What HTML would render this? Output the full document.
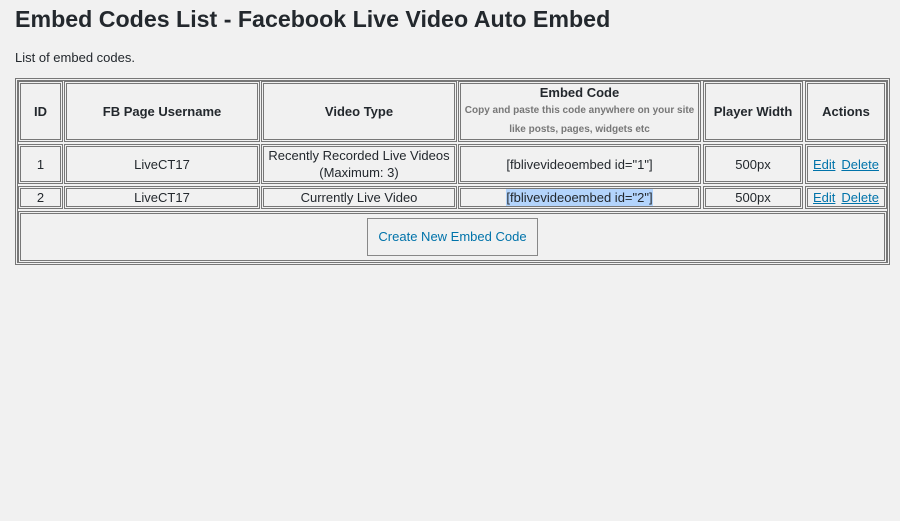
<!DOCTYPE html>
<html><head><style>
body{margin:0;background:#f1f1f1;font-family:"Liberation Sans",sans-serif;color:#23282d;width:900px;height:521px;position:relative;overflow:hidden}
h1{position:absolute;left:15px;top:6px;margin:0;font-size:23.2px;font-weight:bold;color:#23282d}
p{position:absolute;left:15px;top:50px;margin:0;font-size:13px}
.t{position:absolute;left:15px;top:78px;width:875px;height:187px;box-sizing:border-box;border:3px double #777}
.c{position:absolute;box-sizing:border-box;border:3px double #777;display:flex;align-items:center;justify-content:center;text-align:center;font-size:13px;line-height:17px}
.h{font-weight:bold}
a{color:#0073aa;text-decoration:underline;margin:0 3px}
.sel{background:#b3d4fc}
.btn{border:1px solid #888;padding:0 10px;height:36px;line-height:36px;color:#0073aa;font-size:13px}
</style></head><body>
<h1>Embed Codes List - Facebook Live Video Auto Embed</h1>
<p>List of embed codes.</p>
<div class="t"></div>
<div class="c h" style="left:18px;top:81px;width:45px;height:61px">ID</div>
<div class="c h" style="left:64px;top:81px;width:196px;height:61px">FB Page Username</div>
<div class="c h" style="left:261px;top:81px;width:196px;height:61px">Video Type</div>
<div class="c h" style="left:458px;top:81px;width:243px;height:61px;flex-direction:column"><div>Embed Code</div><div style="font-size:10px;color:#777;line-height:19px">Copy and paste this code anywhere on your site<br>like posts, pages, widgets etc</div></div>
<div class="c h" style="left:703px;top:81px;width:100px;height:61px">Player Width</div>
<div class="c h" style="left:805px;top:81px;width:82px;height:61px">Actions</div>

<div class="c" style="left:18px;top:144px;width:45px;height:40px">1</div>
<div class="c" style="left:64px;top:144px;width:196px;height:40px">LiveCT17</div>
<div class="c" style="left:261px;top:144px;width:196px;height:40px">Recently Recorded Live Videos<br>(Maximum: 3)</div>
<div class="c" style="left:458px;top:144px;width:243px;height:40px">[fblivevideoembed id="1"]</div>
<div class="c" style="left:703px;top:144px;width:100px;height:40px">500px</div>
<div class="c" style="left:805px;top:144px;width:82px;height:40px"><a>Edit</a><a>Delete</a></div>

<div class="c" style="left:18px;top:186px;width:45px;height:23px">2</div>
<div class="c" style="left:64px;top:186px;width:196px;height:23px">LiveCT17</div>
<div class="c" style="left:261px;top:186px;width:196px;height:23px">Currently Live Video</div>
<div class="c" style="left:458px;top:186px;width:243px;height:23px"><span class="sel">[fblivevideoembed id="2"]</span></div>
<div class="c" style="left:703px;top:186px;width:100px;height:23px">500px</div>
<div class="c" style="left:805px;top:186px;width:82px;height:23px"><a>Edit</a><a>Delete</a></div>

<div class="c" style="left:18px;top:211px;width:869px;height:52px"><span class="btn">Create New Embed Code</span></div>
</body></html>
